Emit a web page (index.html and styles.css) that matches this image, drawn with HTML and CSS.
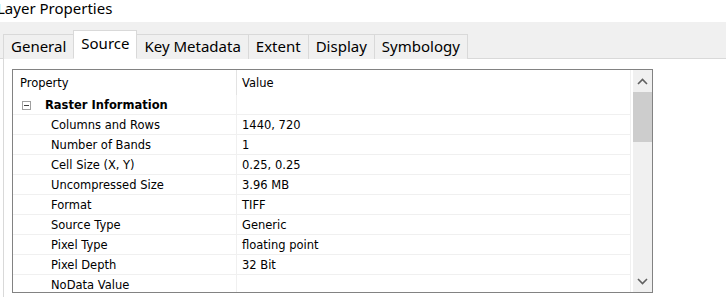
FILE: index.html
```html
<!DOCTYPE html>
<html lang="en">
<head>
  <meta charset="UTF-8">
  <title>Layer Properties</title>
  <link rel="stylesheet" href="styles.css">
</head>
<body>
  <div class="dialog-title">Layer Properties</div>

  <div class="tab-strip">
    <div class="tab">General</div>
    <div class="tab active">Source</div>
    <div class="tab">Key Metadata</div>
    <div class="tab">Extent</div>
    <div class="tab">Display</div>
    <div class="tab">Symbology</div>
  </div>

  <div class="tab-page">
    <div class="grid">
      <div class="grid-body">
        <div class="row header">
          <div class="cell prop">Property</div>
          <div class="cell val">Value</div>
        </div>
        <div class="row category">
          <div class="cell prop">
            <span class="expander"></span>
            <span class="cat-name">Raster Information</span>
          </div>
          <div class="cell val"></div>
        </div>
        <div class="row"><div class="cell prop item">Columns and Rows</div><div class="cell val">1440, 720</div></div>
        <div class="row"><div class="cell prop item">Number of Bands</div><div class="cell val">1</div></div>
        <div class="row"><div class="cell prop item">Cell Size (X, Y)</div><div class="cell val">0.25, 0.25</div></div>
        <div class="row"><div class="cell prop item">Uncompressed Size</div><div class="cell val">3.96 MB</div></div>
        <div class="row"><div class="cell prop item">Format</div><div class="cell val">TIFF</div></div>
        <div class="row"><div class="cell prop item">Source Type</div><div class="cell val">Generic</div></div>
        <div class="row"><div class="cell prop item">Pixel Type</div><div class="cell val">floating point</div></div>
        <div class="row"><div class="cell prop item">Pixel Depth</div><div class="cell val">32 Bit</div></div>
        <div class="row"><div class="cell prop item">NoData Value</div><div class="cell val"></div></div>
      </div>

      <div class="scrollbar">
        <div class="arrow">
          <svg width="11" height="7" viewBox="0 0 11 7"><path d="M1 6 L5.5 1.5 L10 6" fill="none" stroke="#606060" stroke-width="1.6"/></svg>
        </div>
        <div class="thumb"></div>
        <div class="track"></div>
        <div class="arrow">
          <svg width="11" height="7" viewBox="0 0 11 7"><path d="M1 1 L5.5 5.5 L10 1" fill="none" stroke="#606060" stroke-width="1.6"/></svg>
        </div>
      </div>
    </div>
  </div>
</body>
</html>
```
FILE: styles.css
```css
* {
  box-sizing: border-box;
}

body {
  margin: 0;
  background: #ffffff;
  font-family: "Noto Sans", sans-serif;
  color: #000000;
  overflow: hidden;
}

.dialog-title {
  height: 22px;
  margin-left: -3px;
  font-size: 15px;
  line-height: 16px;
}

.tab-strip {
  display: flex;
  align-items: flex-end;
  height: 37px;
  padding-left: 3px;
  background: #f0f0f0;
  border-bottom: 1px solid #d9d9d9;
}

.tab {
  height: 25px;
  margin-bottom: -1px;
  margin-right: -1px;
  padding: 0 7px;
  font-size: 15px;
  line-height: 23px;
  background: #f0f0f0;
  border: 1px solid #d9d9d9;
  border-bottom: none;
}

.tab.active {
  height: 29px;
  line-height: 25px;
  background: #ffffff;
  position: relative;
  z-index: 1;
  border-bottom: 1px solid #ffffff;
}

.tab-page {
  height: 238px;
  margin-left: 3px;
  border-left: 1px solid #d9d9d9;
  padding: 10px 0 0 8px;
}

.grid {
  display: flex;
  width: 641px;
  height: 224px;
  border: 1px solid #828282;
  font-family: "DejaVu Sans", sans-serif;
  font-size: 11.5px;
}

.grid-body {
  flex: 1;
  overflow: hidden;
}

.row {
  display: flex;
  height: 20px;
  border-bottom: 1px solid #f0f0f0;
}

.row.header {
  height: 25px;
  border-bottom: none;
}

.cell {
  display: flex;
  align-items: center;
  padding-top: 1px;
  white-space: nowrap;
}

.cell.prop {
  width: 224px;
  padding-left: 7px;
  border-right: 1px solid #f0f0f0;
}

.cell.val {
  flex: 1;
  padding-left: 5px;
  border-right: 1px solid #f0f0f0;
}

.header .cell.prop {
  border-right: 1px solid #e3e3e3;
}

.cell.item {
  padding-left: 38px;
}

.expander {
  width: 9px;
  height: 9px;
  margin-left: 2px;
  border: 1px solid #a0a0a0;
  position: relative;
}

.expander::after {
  content: "";
  position: absolute;
  left: 1px;
  top: 3px;
  width: 5px;
  height: 1px;
  background: #404040;
}

.cat-name {
  margin-left: 14px;
  font-weight: bold;
}

.scrollbar {
  display: flex;
  flex-direction: column;
  width: 19px;
  margin-left: 2px;
  background: #f0f0f0;
}

.arrow {
  height: 22px;
  display: flex;
  align-items: center;
  justify-content: center;
}

.thumb {
  height: 50px;
  background: #cdcdcd;
}

.track {
  flex: 1;
}
```
